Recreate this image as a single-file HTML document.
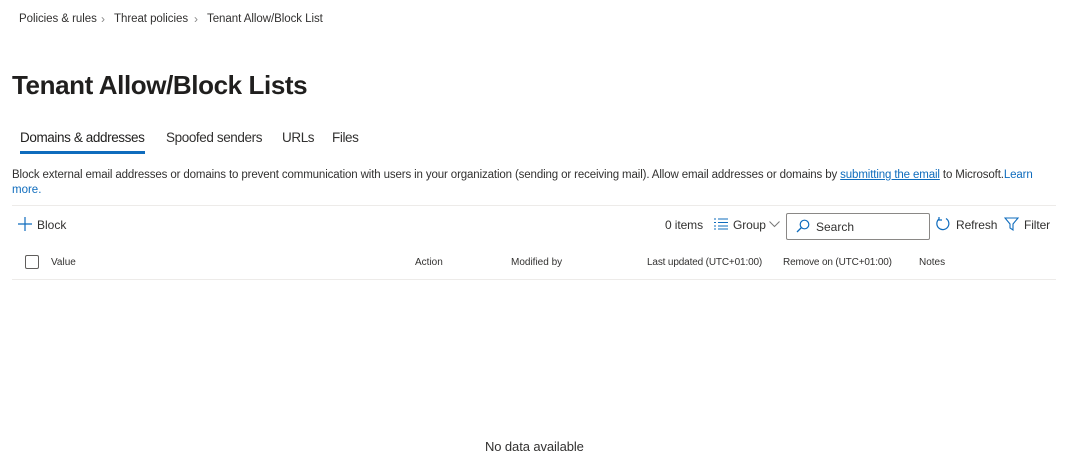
<!DOCTYPE html>
<html><head><style>
body{margin:0;width:1074px;height:464px;background:#fff;font-family:"Liberation Sans",sans-serif;color:#323130;position:relative;overflow:hidden}
.a{position:absolute;white-space:nowrap}
.lnk{color:#0f6cbd}
</style></head><body>
<div class="a" style="left:19px;top:13px;font-size:11.5px;letter-spacing:-0.05px">Policies &amp; rules</div>
<div class="a" style="left:101px;top:12px;font-size:12px;color:#888">›</div>
<div class="a" style="left:114px;top:13px;font-size:11.5px;letter-spacing:-0.05px">Threat policies</div>
<div class="a" style="left:194px;top:12px;font-size:12px;color:#888">›</div>
<div class="a" style="left:207px;top:13px;font-size:11.5px;letter-spacing:-0.05px">Tenant Allow/Block List</div>
<div class="a" style="left:12px;top:70px;font-size:26px;font-weight:bold;color:#201f1e;letter-spacing:-0.4px">Tenant Allow/Block Lists</div>
<div class="a" style="left:20px;top:130px;font-size:13.5px;color:#201f1e;letter-spacing:-0.4px">Domains &amp; addresses</div>
<div class="a" style="left:20px;top:151px;width:125px;height:3px;background:#0f6cbd"></div>
<div class="a" style="left:166px;top:130px;font-size:13.5px;letter-spacing:-0.4px">Spoofed senders</div>
<div class="a" style="left:282px;top:130px;font-size:13.5px;letter-spacing:-0.4px">URLs</div>
<div class="a" style="left:332px;top:130px;font-size:13.5px;letter-spacing:-0.4px">Files</div>
<div class="a" style="left:12px;top:169px;font-size:11.5px;letter-spacing:-0.13px">Block external email addresses or domains to prevent communication with users in your organization (sending or receiving mail). Allow email addresses or domains by <span class="lnk" style="text-decoration:underline">submitting the email</span> to Microsoft.<span class="lnk">Learn</span></div>
<div class="a lnk" style="left:12px;top:184px;font-size:11.5px">more.</div>
<div class="a" style="left:12px;top:205px;width:1044px;height:1px;background:#edebe9"></div>
<svg class="a" style="left:18px;top:217px" width="14" height="14"><path d="M7 0v14M0 7h14" stroke="#0f6cbd" stroke-width="1.2"/></svg>
<div class="a" style="left:37px;top:218px;font-size:12px">Block</div>
<div class="a" style="left:665px;top:218px;font-size:12px;letter-spacing:-0.1px">0 items</div>
<svg class="a" style="left:714px;top:218px" width="14" height="12"><path d="M0 1h2M0 4.5h2M0 8h2M0 11h2M4 1h10M4 4.5h10M4 8h10M4 11h10" stroke="#0f6cbd" stroke-width="1"/></svg>
<div class="a" style="left:733px;top:218px;font-size:12px;letter-spacing:-0.1px">Group</div>
<svg class="a" style="left:769px;top:221px" width="11" height="7"><path d="M0.5 0.5l5 5 5-5" fill="none" stroke="#777" stroke-width="1"/></svg>
<div class="a" style="left:786px;top:213px;width:142px;height:25px;border:1px solid #8a8886;border-radius:2px"></div>
<svg class="a" style="left:796px;top:219px" width="14" height="14"><circle cx="8.5" cy="5.5" r="4.3" fill="none" stroke="#0f6cbd" stroke-width="1.2"/><path d="M5.5 8.5L1 13" stroke="#0f6cbd" stroke-width="1.3"/></svg>
<div class="a" style="left:816px;top:220px;font-size:12px">Search</div>
<svg class="a" style="left:935px;top:216px" width="16" height="16"><path d="M11 2.5A6 6 0 1 1 4 3" fill="none" stroke="#0f6cbd" stroke-width="1.2"/><path d="M4 1v3h3" fill="none" stroke="#0f6cbd" stroke-width="1.2"/></svg>
<div class="a" style="left:956px;top:218px;font-size:12px;letter-spacing:-0.1px">Refresh</div>
<svg class="a" style="left:1004px;top:217px" width="16" height="15"><path d="M1 1h13l-5 6v6l-3-2V7z" fill="none" stroke="#0f6cbd" stroke-width="1.1"/></svg>
<div class="a" style="left:1024px;top:218px;font-size:12px;letter-spacing:-0.1px">Filter</div>
<div class="a" style="left:25px;top:255px;width:12px;height:12px;border:1px solid #605e5c;border-radius:2px"></div>
<div class="a" style="left:51px;top:257px;font-size:10px">Value</div>
<div class="a" style="left:415px;top:257px;font-size:10px">Action</div>
<div class="a" style="left:511px;top:257px;font-size:10px">Modified by</div>
<div class="a" style="left:647px;top:257px;font-size:10px;letter-spacing:-0.15px">Last updated (UTC+01:00)</div>
<div class="a" style="left:783px;top:257px;font-size:10px;letter-spacing:-0.15px">Remove on (UTC+01:00)</div>
<div class="a" style="left:919px;top:257px;font-size:10px">Notes</div>
<div class="a" style="left:12px;top:279px;width:1044px;height:1px;background:#edebe9"></div>
<div class="a" style="left:485px;top:439px;font-size:13px;letter-spacing:-0.1px">No data available</div>
</body></html>
